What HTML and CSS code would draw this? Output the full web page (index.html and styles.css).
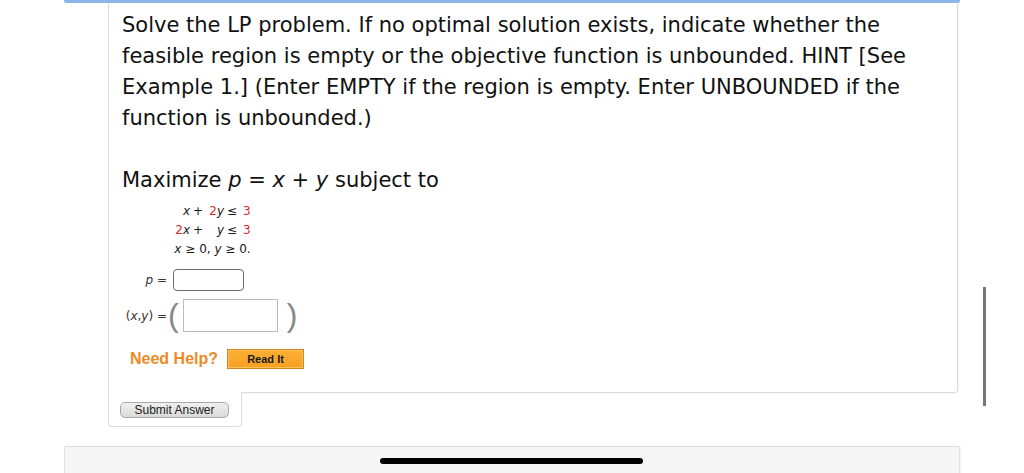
FILE: index.html
```html
<!DOCTYPE html>
<html>
<head>
<meta charset="utf-8">
<link rel="stylesheet" href="styles.css">
</head>
<body>
<div class="page">
  <div class="prev"></div>
  <div class="qwrap">
    <div class="question">
      <p class="prompt">Solve the LP problem. If no optimal solution exists, indicate whether the<br>feasible region is empty or the objective function is unbounded. HINT [See<br>Example 1.] (Enter EMPTY if the region is empty. Enter UNBOUNDED if the<br>function is unbounded.)</p>
      <p class="prompt max">Maximize <i>p</i> = <i>x</i> + <i>y</i> subject to</p>
      <div class="constraints">
        <span class="c1"><i>x</i></span><span class="c2">+</span><span class="c3"><span class="red">2</span><i>y</i></span><span class="c4">≤</span><span class="c5 red">3</span>
        <span class="c1"><span class="red">2</span><i>x</i></span><span class="c2">+</span><span class="c3"><i>y</i></span><span class="c4">≤</span><span class="c5 red">3</span>
        <span class="call"><i>x</i> ≥ 0, <i>y</i> ≥ 0.</span>
      </div>
      <div class="answers">
        <span class="lbl"><i>p</i> =</span>
        <span class="pbox"></span>
        <span class="lbl xylbl">(<i>x</i>,<i>y</i>) =</span>
        <span class="xy"><span class="paren">(</span><span class="xybox"></span><span class="paren rp">)</span></span>
      </div>
      <div class="help">
        <span class="need">Need Help?</span>
        <span class="readit">Read It</span>
      </div>
    </div>
    <div class="tab"><span class="submit">Submit Answer</span></div>
  </div>
  <div class="next"></div>
</div>
<div class="scroll-ind"></div>
<div class="home-ind"></div>
</body>
</html>
```

FILE: styles.css
```css
html, body {
  margin: 0;
  padding: 0;
  background: #ffffff;
  overflow: hidden;
  height: 473px;
}
.page {
  width: 896px;
  margin-left: 64px;
}
.prev {
  height: 0;
  border: 3px solid #8db5ea;
  border-top: 0;
  border-radius: 0 0 5px 5px;
}
.qwrap {
  padding-left: 44px;
  padding-right: 2px;
}
.question {
  border: 1px solid #dcdcdc;
  border-top: 0;
  border-radius: 0 0 3px 0;
  padding: 7px 14px 23px 13px;
  box-shadow: 1px 1px 1px rgba(0,0,0,0.04);
}
.prompt {
  margin: 0 0 31px 0;
  font-family: "DejaVu Sans", Verdana, sans-serif;
  font-size: 21px;
  line-height: 31px;
  color: #111;
  white-space: nowrap;
}
.prompt.max { margin: 0; }
.constraints {
  display: grid;
  grid-template-columns: 18px 16px 18px 16px 13px;
  margin: 6px 0 0 50px;
  width: 81px;
  font-family: "DejaVu Sans", Verdana, sans-serif;
  font-size: 12px;
  line-height: 19px;
  color: #1a1a1a;
  white-space: nowrap;
}
.c1, .c3 { justify-self: end; }
.c2, .c4 { justify-self: center; }
.c5 { justify-self: start; padding-left: 3px; }
.call { grid-column: 1 / -1; justify-self: center; }
.red { color: #d8262c; }
.answers {
  display: grid;
  grid-template-columns: 45px auto;
  column-gap: 6px;
  row-gap: 8px;
  align-items: center;
  justify-items: start;
  margin-top: 10px;
  font-family: "DejaVu Sans", Verdana, sans-serif;
  font-size: 12px;
  color: #333;
}
.lbl { justify-self: end; white-space: nowrap; }
.pbox {
  width: 69px;
  height: 20px;
  border: 1px solid #6b6b6b;
  border-radius: 4px;
  background: #fff;
}
.xy {
  display: flex;
  align-items: center;
  margin-left: -5px;
}
.paren {
  font-family: "Liberation Sans", Arial, sans-serif;
  font-size: 32px;
  line-height: 33px;
  color: #888;
  height: 33px;
}
.xybox {
  width: 93px;
  height: 31px;
  border: 1px solid #bdbdbd;
  background: #fff;
  margin-left: 4px;
}
.rp { margin-left: 9px; }
.help {
  display: flex;
  align-items: center;
  margin-top: 17px;
  padding-left: 8px;
}
.need {
  font-family: "Liberation Sans", Arial, sans-serif;
  font-weight: bold;
  font-size: 16px;
  color: #ec8b25;
  margin-right: 9px;
}
.readit {
  display: inline-block;
  box-sizing: border-box;
  width: 77px;
  height: 20px;
  border: 1px solid #d8821f;
  box-shadow: inset 0 0 0 1px #ffc25a;
  background: linear-gradient(#fbb035, #f6a020);
  font-family: "Liberation Sans", Arial, sans-serif;
  font-weight: bold;
  font-size: 11px;
  line-height: 18px;
  text-align: center;
  color: #1a1a1a;
}
.tab {
  width: 134px;
  box-sizing: border-box;
  margin-top: -1px;
  background: #fff;
  border: 1px solid #dcdcdc;
  border-top: 0;
  border-radius: 0 0 4px 4px;
  padding: 10px 0 8px 11px;
  position: relative;
}
.submit {
  display: block;
  box-sizing: border-box;
  width: 109px;
  height: 16px;
  border: 1px solid #a9a9a9;
  border-radius: 5px;
  background: linear-gradient(#f0f0f0, #d9d9d9);
  font-family: "Liberation Sans", Arial, sans-serif;
  font-size: 12px;
  line-height: 14px;
  text-align: center;
  color: #222;
}
.next {
  margin-top: 19px;
  height: 40px;
  background: #f5f5f5;
  border: 1px solid #e0e0e0;
  border-bottom: 0;
  box-shadow: 1px 0 2px rgba(0,0,0,0.06);
}
.scroll-ind {
  position: absolute;
  left: 983px;
  top: 287px;
  width: 3px;
  height: 119px;
  background: #777;
}
.home-ind {
  position: absolute;
  left: 380px;
  top: 458px;
  width: 263px;
  height: 6px;
  border-radius: 3px;
  background: #000;
}
```
